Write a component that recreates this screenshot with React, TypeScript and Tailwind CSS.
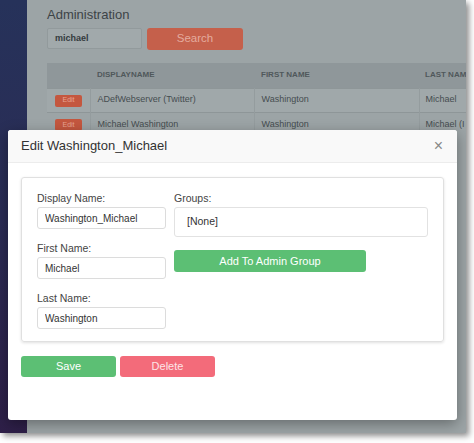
import type { ReactNode } from "react";

const FONT = { fontFamily: '"Liberation Sans", Arial, sans-serif' };

const INPUT_CLASS =
  "block h-[22px] w-[129px] rounded-[3px] border border-[#dcdcdc] bg-white px-[7px] text-[10px] text-[#333] outline-none";

const rows = [
  { display: "ADefWebserver (Twitter)", first: "Washington", last: "Michael" },
  { display: "Michael Washington", first: "Washington", last: "Michael (I" },
];

export default function App() {
  return (
    <div className="h-[443px] w-[474px] bg-white" style={FONT}>
      <div className="relative flex h-[433px] w-[466px] overflow-hidden shadow-[3px_3px_6px_rgba(0,0,0,0.45)]">
        <aside className="w-[27px] shrink-0 bg-gradient-to-b from-[#26325a] via-[#2a2c55] to-[#2e1f48]" />
        <AdminPage />
        <EditUserModal />
      </div>
    </div>
  );
}

function AdminPage() {
  return (
    <main className="flex-1 overflow-hidden bg-[#9ca4a6] pl-[20px] pt-[5px]">
      <h1 className="text-[13px] leading-[20px] text-[#3c4346]">Administration</h1>
      <div className="mt-[3px] flex gap-[5px]">
        <div className="flex h-[21px] w-[95px] items-center rounded-[2px] border border-[#929a9c] bg-[#a1a9ab] px-[7px] text-[9px] font-bold text-[#343b3e]">
          michael
        </div>
        <button className="h-[22px] w-[96px] rounded-[3px] bg-[#c5604b] text-[11.5px] text-[#e4ab9e]">
          Search
        </button>
      </div>
      <table className="mt-[13px] w-[470px] table-fixed border-collapse text-left">
        <colgroup>
          <col className="w-[43px]" />
          <col className="w-[164px]" />
          <col className="w-[165px]" />
          <col />
        </colgroup>
        <thead>
          <tr className="h-[25px] bg-[#8f979a] text-[8px] uppercase text-[#50585b]">
            <th className="font-bold" />
            <th className="pl-[7px] font-bold">DisplayName</th>
            <th className="pl-[7px] font-bold">First Name</th>
            <th className="pl-[6px] font-bold">Last Name</th>
          </tr>
        </thead>
        <tbody className="text-[9px] text-[#464d50]">
          {rows.map((row, i) => (
            <tr
              key={row.display}
              className={`h-[24px] border-t border-[#8e9698] ${i === 0 ? "bg-[#a0a8aa]" : "bg-[#9ca4a6]"}`}
            >
              <td className="border-r border-[#949c9e] pl-[8px]">
                <span className="inline-flex h-[12px] w-[27px] items-center justify-center rounded-[2px] bg-[#c4573f] text-[7px] text-[#e8a393]">
                  Edit
                </span>
              </td>
              <td className="border-r border-[#949c9e] pl-[7px]">{row.display}</td>
              <td className="border-r border-[#949c9e] pl-[7px]">{row.first}</td>
              <td className="pl-[6px]">{row.last}</td>
            </tr>
          ))}
        </tbody>
      </table>
    </main>
  );
}

function EditUserModal() {
  return (
    <div className="absolute left-[8px] top-[130px] flex h-[290px] w-[449px] flex-col rounded-[3px] bg-white shadow-[0_4px_14px_rgba(0,0,0,0.35)]">
      <div className="flex h-[33px] items-center justify-between rounded-t-[3px] border-b border-[#ececec] bg-[#f9f9f9] pl-[13px] pr-[14px]">
        <h2 className="text-[13px] text-[#333]">Edit Washington_Michael</h2>
        <span className="text-[16px] leading-none text-[#888]">×</span>
      </div>

      <div className="mx-[13px] mt-[14px] flex h-[165px] w-[423px] gap-[8px] rounded-[3px] border border-[#e0e0e0] px-[15px] pt-[13px] shadow-[0_1px_3px_rgba(0,0,0,0.12)]">
        <div className="flex flex-col gap-[12px]">
          <Field label="Display Name:">
            <input className={INPUT_CLASS} defaultValue="Washington_Michael" />
          </Field>
          <Field label="First Name:">
            <input className={INPUT_CLASS} defaultValue="Michael" />
          </Field>
          <Field label="Last Name:">
            <input className={INPUT_CLASS} defaultValue="Washington" />
          </Field>
        </div>
        <div className="flex flex-col">
          <Field label="Groups:">
            <div className="flex h-[30px] w-[254px] items-center rounded-[3px] border border-[#e2e2e2] pl-[12px] text-[10.5px] text-[#333]">
              [None]
            </div>
          </Field>
          <button className="mt-[13px] h-[22px] w-[192px] rounded-[3px] bg-[#5cbf74] text-[11px] text-white">
            Add To Admin Group
          </button>
        </div>
      </div>

      <div className="ml-[13px] mt-[14px] flex gap-[4px]">
        <button className="h-[21px] w-[95px] rounded-[3px] bg-[#5cbf74] text-[11px] text-white">
          Save
        </button>
        <button className="h-[21px] w-[95px] rounded-[3px] bg-[#f36b7a] text-[11px] text-[#fde4e7]">
          Delete
        </button>
      </div>
    </div>
  );
}

function Field({ label, children }: { label: string; children: ReactNode }) {
  return (
    <label className="block">
      <div className="mb-[1px] text-[10.5px] leading-[15px] text-[#444]">{label}</div>
      {children}
    </label>
  );
}
